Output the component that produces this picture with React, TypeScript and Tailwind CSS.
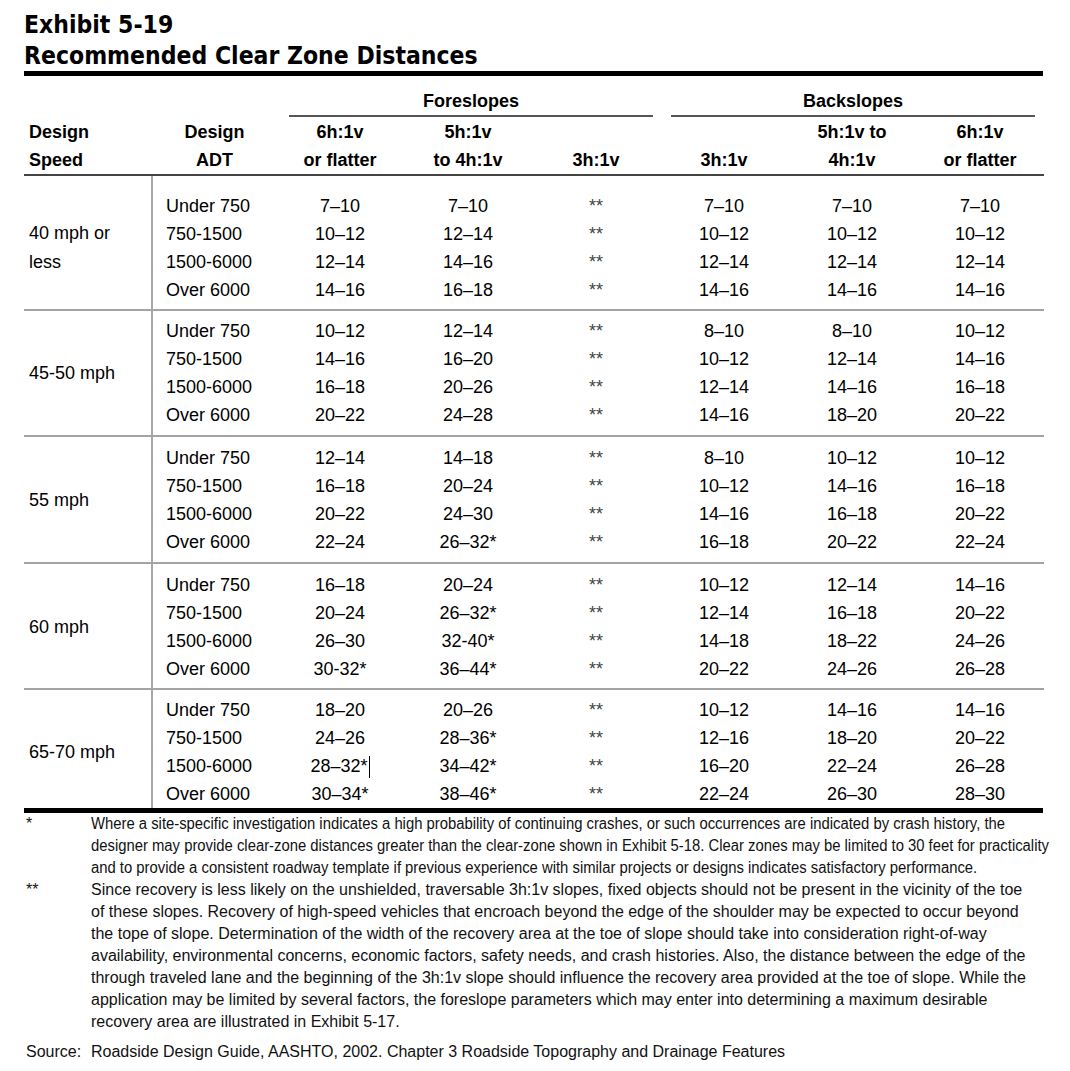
const groups = [
  {
    speed: ["40 mph or", "less"],
    line: "border-b-2 border-[#a3a3a3]",
    pad: "pt-[16px] pb-[5px]",
    rows: [
      ["Under 750", "7–10", "7–10", "**", "7–10", "7–10", "7–10"],
      ["750-1500", "10–12", "12–14", "**", "10–12", "10–12", "10–12"],
      ["1500-6000", "12–14", "14–16", "**", "12–14", "12–14", "12–14"],
      ["Over 6000", "14–16", "16–18", "**", "14–16", "14–16", "14–16"],
    ],
  },
  {
    speed: ["45-50 mph"],
    line: "border-b-2 border-[#a3a3a3]",
    pad: "pt-[6px] pb-[6px]",
    rows: [
      ["Under 750", "10–12", "12–14", "**", "8–10", "8–10", "10–12"],
      ["750-1500", "14–16", "16–20", "**", "10–12", "12–14", "14–16"],
      ["1500-6000", "16–18", "20–26", "**", "12–14", "14–16", "16–18"],
      ["Over 6000", "20–22", "24–28", "**", "14–16", "18–20", "20–22"],
    ],
  },
  {
    speed: ["55 mph"],
    line: "border-b-2 border-[#a3a3a3]",
    pad: "pt-[7px] pb-[6px]",
    rows: [
      ["Under 750", "12–14", "14–18", "**", "8–10", "10–12", "10–12"],
      ["750-1500", "16–18", "20–24", "**", "10–12", "14–16", "16–18"],
      ["1500-6000", "20–22", "24–30", "**", "14–16", "16–18", "20–22"],
      ["Over 6000", "22–24", "26–32*", "**", "16–18", "20–22", "22–24"],
    ],
  },
  {
    speed: ["60 mph"],
    line: "border-b-2 border-[#a3a3a3]",
    pad: "pt-[7px] pb-[5px]",
    rows: [
      ["Under 750", "16–18", "20–24", "**", "10–12", "12–14", "14–16"],
      ["750-1500", "20–24", "26–32*", "**", "12–14", "16–18", "20–22"],
      ["1500-6000", "26–30", "32-40*", "**", "14–18", "18–22", "24–26"],
      ["Over 6000", "30-32*", "36–44*", "**", "20–22", "24–26", "26–28"],
    ],
  },
  {
    speed: ["65-70 mph"],
    line: "",
    pad: "pt-[6px] pb-0",
    rows: [
      ["Under 750", "18–20", "20–26", "**", "10–12", "14–16", "14–16"],
      ["750-1500", "24–26", "28–36*", "**", "12–16", "18–20", "20–22"],
      ["1500-6000", "28–32*|", "34–42*", "**", "16–20", "22–24", "26–28"],
      ["Over 6000", "30–34*", "38–46*", "**", "22–24", "26–30", "28–30"],
    ],
  },
];

const note1 = [
  "Where a site-specific investigation indicates a high probability of continuing crashes, or such occurrences are indicated by crash history, the",
  "designer may provide clear-zone distances greater than the clear-zone shown in Exhibit 5-18. Clear zones may be limited to 30 feet for practicality",
  "and to provide a consistent roadway template if previous experience with similar projects or designs indicates satisfactory performance.",
];

const note2 = [
  "Since recovery is less likely on the unshielded, traversable 3h:1v slopes, fixed objects should not be present in the vicinity of the toe",
  "of these slopes. Recovery of high-speed vehicles that encroach beyond the edge of the shoulder may be expected to occur beyond",
  "the tope of slope. Determination of the width of the recovery area at the toe of slope should take into consideration right-of-way",
  "availability, environmental concerns, economic factors, safety needs, and crash histories. Also, the distance between the edge of the",
  "through traveled lane and the beginning of the 3h:1v slope should influence the recovery area provided at the toe of slope. While the",
  "application may be limited by several factors, the foreslope parameters which may enter into determining a maximum desirable",
  "recovery area are illustrated in Exhibit 5-17.",
];

function Cell({ value }: { value: string }) {
  if (value === "**") {
    return <div className="text-center text-[#444]">**</div>;
  }
  if (value.endsWith("|")) {
    // the original has a stray text cursor after this value
    return (
      <div className="text-center">
        {value.slice(0, -1)}
        <span className="inline-block w-[1px] h-[22px] bg-black align-middle ml-[1px]" />
      </div>
    );
  }
  return <div className="text-center">{value}</div>;
}

function App() {
  return (
    <div className="w-[1070px] h-[1071px] overflow-hidden bg-white text-black pl-[24px] pt-[9px] font-['Liberation_Sans',Arial,sans-serif]">
      <div className="w-[1020px]">
        <div className="font-['DejaVu_Sans_Condensed','DejaVu_Sans',sans-serif] font-bold text-[24.5px] leading-[31px]">
          <div>Exhibit 5-19</div>
          <div>Recommended Clear Zone Distances</div>
        </div>
        <div className="h-[5px] w-[1019px] bg-black" />

        {/* header */}
        <div className="mt-[11px] flex text-[18px] font-bold">
          <div className="w-[252px]" />
          <div className="w-[384px] pl-[13px] pr-[7px]">
            <div className="text-center leading-[28px]">Foreslopes</div>
            <div className="h-[2px] bg-[#555]" />
          </div>
          <div className="w-[384px] pl-[11px] pr-[9px]">
            <div className="text-center leading-[28px]">Backslopes</div>
            <div className="h-[2px] bg-[#555]" />
          </div>
        </div>
        <div className="mt-[1px] grid grid-cols-[129px_123px_repeat(6,128px)] text-[18px] font-bold leading-[28px] border-b-2 border-[#444]">
          <div className="pl-[5px]">
            <div>Design</div>
            <div>Speed</div>
          </div>
          <div className="text-center">
            <div>Design</div>
            <div>ADT</div>
          </div>
          <div className="text-center">
            <div>6h:1v</div>
            <div>or flatter</div>
          </div>
          <div className="text-center">
            <div>5h:1v</div>
            <div>to 4h:1v</div>
          </div>
          <div className="text-center">
            <div>&nbsp;</div>
            <div>3h:1v</div>
          </div>
          <div className="text-center">
            <div>&nbsp;</div>
            <div>3h:1v</div>
          </div>
          <div className="text-center">
            <div>5h:1v to</div>
            <div>4h:1v</div>
          </div>
          <div className="text-center">
            <div>6h:1v</div>
            <div>or flatter</div>
          </div>
        </div>

        {/* body */}
        {groups.map((g) => (
          <div key={g.speed.join(" ")} className={"flex text-[18px] " + g.line}>
            <div className={"w-[129px] pl-[5px] flex flex-col justify-center leading-[29px] border-r-2 border-[#a8a8a8] " + g.pad}>
              {g.speed.map((s) => (
                <div key={s}>{s}</div>
              ))}
            </div>
            <div className={g.pad}>
              {g.rows.map((r) => (
                <div key={r[0]} className="grid grid-cols-[123px_repeat(6,128px)] h-[28px] leading-[28px]">
                  <div className="pl-[13px]">{r[0]}</div>
                  {r.slice(1).map((v, i) => (
                    <Cell key={i} value={v} />
                  ))}
                </div>
              ))}
            </div>
          </div>
        ))}
        <div className="h-[5px] w-[1019px] bg-black" />

        {/* notes */}
        <div className="text-[16px] leading-[22px] text-[#111]">
          {note1.map((l, i) => (
            <div key={l} className="flex">
              <div className="w-[67px] shrink-0 pl-[2px]">{i === 0 ? "*" : ""}</div>
              <div className="whitespace-nowrap origin-left scale-x-[0.927]">{l}</div>
            </div>
          ))}
          {note2.map((l, i) => (
            <div key={l} className="flex">
              <div className="w-[67px] shrink-0 pl-[2px]">{i === 0 ? "**" : ""}</div>
              <div className="whitespace-nowrap">{l}</div>
            </div>
          ))}
          <div className="mt-[8px] flex">
            <div className="w-[67px] shrink-0 pl-[2px]">Source:</div>
            <div className="whitespace-nowrap">
              Roadside Design Guide, AASHTO, 2002. Chapter 3 Roadside Topography and Drainage Features
            </div>
          </div>
        </div>
      </div>
    </div>
  );
}

export default App;
